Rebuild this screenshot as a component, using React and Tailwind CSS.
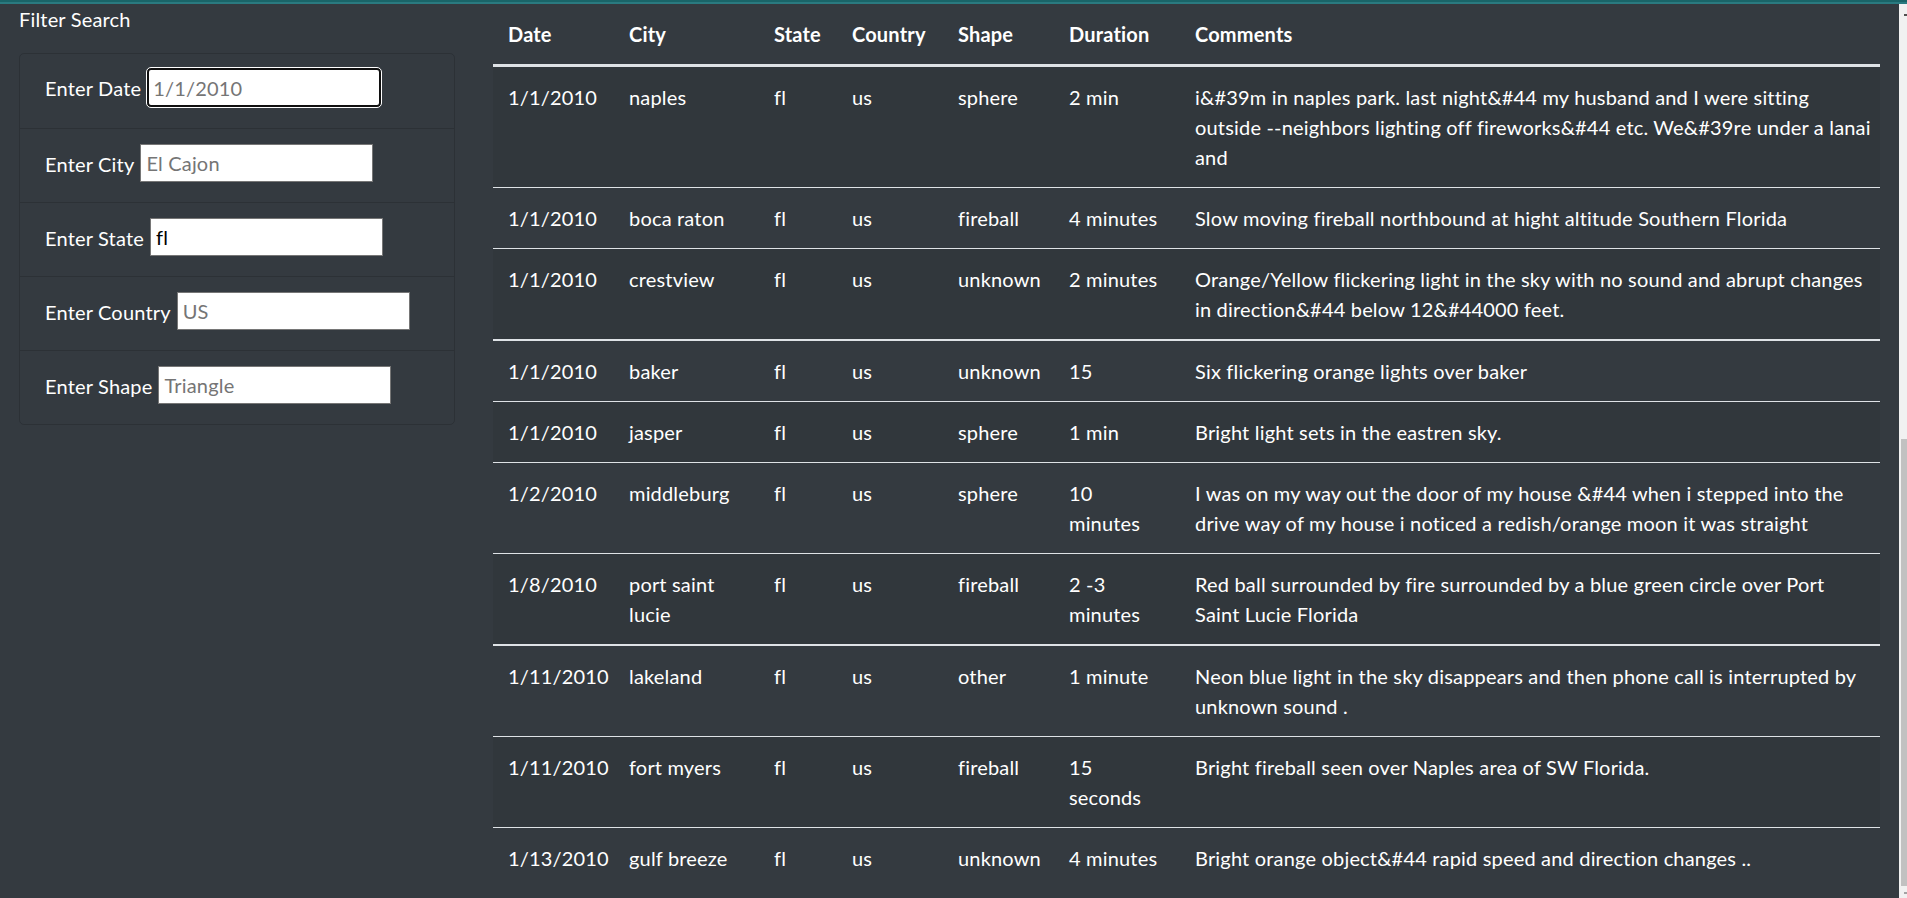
import React from "react";

const rows = [
  { date: "1/1/2010", city: ["naples"], state: "fl", country: "us", shape: "sphere", duration: ["2 min"], comments: ["i&#39m in naples park. last night&#44 my husband and I were sitting", "outside --neighbors lighting off fireworks&#44 etc. We&#39re under a lanai", "and"] },
  { date: "1/1/2010", city: ["boca raton"], state: "fl", country: "us", shape: "fireball", duration: ["4 minutes"], comments: ["Slow moving fireball northbound at hight altitude Southern Florida"] },
  { date: "1/1/2010", city: ["crestview"], state: "fl", country: "us", shape: "unknown", duration: ["2 minutes"], comments: ["Orange/Yellow flickering light in the sky with no sound and abrupt changes", "in direction&#44 below 12&#44000 feet."] },
  { date: "1/1/2010", city: ["baker"], state: "fl", country: "us", shape: "unknown", duration: ["15"], comments: ["Six flickering orange lights over baker"], thick: true },
  { date: "1/1/2010", city: ["jasper"], state: "fl", country: "us", shape: "sphere", duration: ["1 min"], comments: ["Bright light sets in the eastren sky."] },
  { date: "1/2/2010", city: ["middleburg"], state: "fl", country: "us", shape: "sphere", duration: ["10", "minutes"], comments: ["I was on my way out the door of my house &#44 when i stepped into the", "drive way of my house i noticed a redish/orange moon it was straight"] },
  { date: "1/8/2010", city: ["port saint", "lucie"], state: "fl", country: "us", shape: "fireball", duration: ["2 -3", "minutes"], comments: ["Red ball surrounded by fire surrounded by a blue green circle over Port", "Saint Lucie Florida"] },
  { date: "1/11/2010", city: ["lakeland"], state: "fl", country: "us", shape: "other", duration: ["1 minute"], comments: ["Neon blue light in the sky disappears and then phone call is interrupted by", "unknown sound ."], thick: true },
  { date: "1/11/2010", city: ["fort myers"], state: "fl", country: "us", shape: "fireball", duration: ["15", "seconds"], comments: ["Bright fireball seen over Naples area of SW Florida."] },
  { date: "1/13/2010", city: ["gulf breeze"], state: "fl", country: "us", shape: "unknown", duration: ["4 minutes"], comments: ["Bright orange object&#44 rapid speed and direction changes .."] },
];

const filters = [
  { label: "Enter Date", placeholder: "1/1/2010", focused: true },
  { label: "Enter City", placeholder: "El Cajon" },
  { label: "Enter State", value: "fl" },
  { label: "Enter Country", placeholder: "US" },
  { label: "Enter Shape", placeholder: "Triangle" },
];

function Lines({ lines }) {
  return (
    <>
      {lines.map((l, i) => (
        <div key={i} className="whitespace-nowrap">{l}</div>
      ))}
    </>
  );
}

export default function App() {
  return (
    <div className="w-[1907px] h-[898px] overflow-hidden bg-[#343a40] text-white flex flex-col font-['Lato',sans-serif] tracking-[0.18px]">
      <div className="h-[4px] flex flex-col shrink-0">
        <div className="h-[2px] bg-[#1a6468]" />
        <div className="h-[2px] bg-[#2a7a80]" />
      </div>
      <div className="flex flex-1 min-h-0">
        <div className="flex-1 flex min-w-0">
          {/* Left column */}
          <div className="w-[474px] shrink-0 px-[19px]">
            <div className="text-[20px] leading-[30px]">Filter Search</div>
            <div className="mt-[19px] border border-black/[.15] rounded-[5px]">
              {filters.map((f, i) => (
                <div
                  key={f.label}
                  className={`h-[74px] flex items-start pt-[14px] pl-[25px] text-[20px] ${i > 0 ? "border-t border-black/[.15]" : ""}`}
                >
                  <label className={f.focused ? "leading-[39px] pt-[1px]" : "leading-[38px] pt-[2px]"}>{f.label}</label>
                  {f.focused ? (
                    <input
                      readOnly
                      placeholder={f.placeholder}
                      className="ml-[6px] w-[234px] h-[39px] bg-white border-2 border-[#101010] rounded-[4px] outline outline-1 outline-white px-[4px] text-[20px] text-black placeholder:text-[#757575] font-['Lato',sans-serif]"
                    />
                  ) : (
                    <input
                      readOnly
                      placeholder={f.placeholder}
                      defaultValue={f.value}
                      className="ml-[6px] mt-[1px] w-[233px] h-[38px] bg-white border border-[#767676] px-[5px] text-[20px] text-black placeholder:text-[#757575] outline-none font-['Lato',sans-serif]"
                    />
                  )}
                </div>
              ))}
            </div>
          </div>
          {/* Table */}
          <div className="flex-1 px-[19px] min-w-0">
            <table className="w-full table-fixed border-collapse text-[20px] leading-[30px]">
              <colgroup>
                <col className="w-[121px]" />
                <col className="w-[145px]" />
                <col className="w-[78px]" />
                <col className="w-[106px]" />
                <col className="w-[111px]" />
                <col className="w-[126px]" />
                <col />
              </colgroup>
              <thead>
                <tr className="border-b-[3px] border-[#dee2e6]">
                  {["Date", "City", "State", "Country", "Shape", "Duration", "Comments"].map((h) => (
                    <th key={h} className="text-left font-bold px-[15px] py-[15px] align-bottom whitespace-nowrap">
                      {h}
                    </th>
                  ))}
                </tr>
              </thead>
              <tbody>
                {rows.map((r, i) => (
                  <tr
                    key={i}
                    className={`${r.thick ? "border-t-2" : "border-t"} border-[#dee2e6] ${i % 2 === 0 ? "bg-black/[.05]" : ""}`}
                  >
                    <td className="px-[15px] py-[15px] align-top whitespace-nowrap">{r.date}</td>
                    <td className="px-[15px] py-[15px] align-top"><Lines lines={r.city} /></td>
                    <td className="px-[15px] py-[15px] align-top">{r.state}</td>
                    <td className="px-[15px] py-[15px] align-top">{r.country}</td>
                    <td className="px-[15px] py-[15px] align-top">{r.shape}</td>
                    <td className="px-[15px] py-[15px] align-top"><Lines lines={r.duration} /></td>
                    <td className="px-[15px] py-[15px] align-top"><Lines lines={r.comments} /></td>
                  </tr>
                ))}
              </tbody>
            </table>
          </div>
        </div>
        {/* Scrollbar (partially visible) */}
        <div className="w-[8px] shrink-0 bg-[#f1f1f1] flex flex-col">
          <div className="h-[12px] flex items-end justify-end">
            <div className="w-[3px] h-[2px] bg-[#505050]" />
          </div>
          <div className="mt-[423px] ml-[2px] h-[447px] bg-[#c1c1c1]" />
          <div className="mt-[6px] flex justify-end">
            <div className="w-[3px] h-[2px] bg-[#a3a3a3]" />
          </div>
        </div>
      </div>
    </div>
  );
}
